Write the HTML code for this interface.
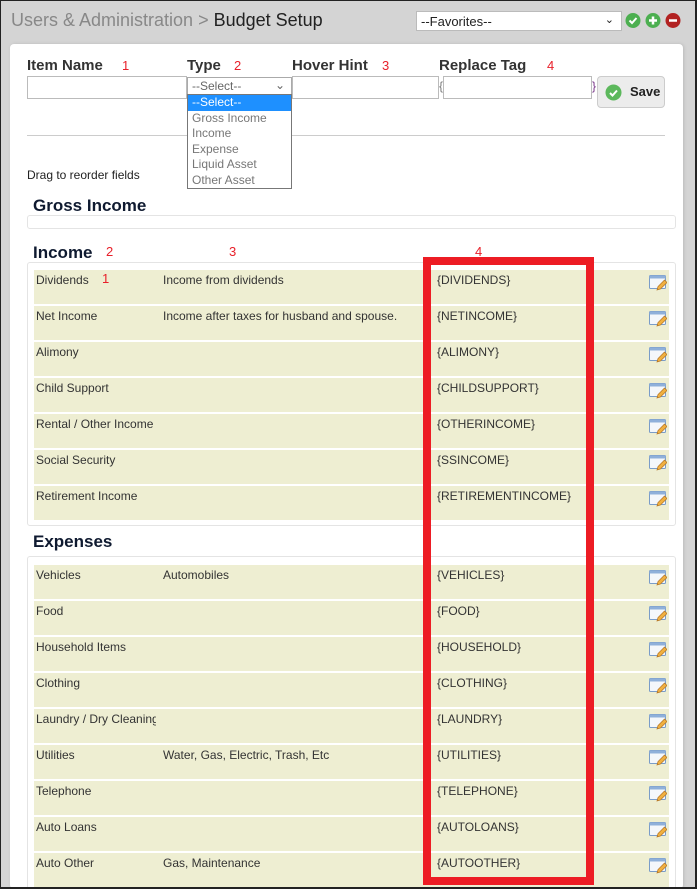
<!DOCTYPE html>
<html><head><style>
*{box-sizing:border-box;margin:0;padding:0}
html,body{width:697px;height:889px;overflow:hidden}
body{background:#d4d4d4;font-family:"Liberation Sans",Arial,sans-serif;position:relative}
.a{position:absolute}
.frame{left:0;top:0;width:697px;height:889px;border:1px solid #222;border-right:2px solid #222;border-bottom:2px solid #222;z-index:50;pointer-events:none}
.panel{left:10px;top:44px;width:673px;height:845px;background:#fff;border-radius:4px;box-shadow:1px 0 3px #bbb}
.lbl{font-weight:bold;font-size:15px;color:#333;top:57px}
.rn{color:#e8202a;font-size:13px}
.inp{border:1px solid #bbb;background:#fff;height:23px;top:76px}
.row{left:34px;width:635px;height:34px;background:#eeeed2;font-size:12px;color:#333}
.row span{position:absolute;top:3px}
.h{font-weight:bold;font-size:17px;color:#0f1a30}
.ic{position:absolute;left:615px;top:5px;width:18px;height:16px}
.box{border:1px solid #e4e4e4;border-radius:3px}
</style></head><body>
<div class="a panel"></div>
<div class="a" style="left:11px;top:10px;font-size:18px;color:#888">Users &amp; Administration &gt; <span style="color:#222">Budget Setup</span></div>
<div class="a" style="left:416px;top:11px;width:206px;height:20px;border:1px solid #bbb;background:#fff;font-size:13px;color:#222;padding:2px 4px">--Favorites--<span style="position:absolute;right:7px;top:1px;font-size:11px">&#8964;</span></div>
<svg class="a" style="left:625px;top:12px" width="60" height="17">
<circle cx="8" cy="8.5" r="7.5" fill="#4caf50"/><path d="M4.5 8.5l2.5 2.5 4.5-5" stroke="#fff" stroke-width="2" fill="none"/>
<circle cx="28" cy="8.5" r="7.5" fill="#4caf50"/><path d="M28 4.5v8M24 8.5h8" stroke="#fff" stroke-width="2.5"/>
<circle cx="48" cy="8.5" r="7.5" fill="#b22222"/><path d="M44 8.5h8" stroke="#fff" stroke-width="2.5"/></svg>

<div class="a lbl" style="left:27px">Item Name</div><div class="a rn" style="left:122px;top:58px">1</div>
<div class="a lbl" style="left:187px">Type</div><div class="a rn" style="left:234px;top:58px">2</div>
<div class="a lbl" style="left:292px">Hover Hint</div><div class="a rn" style="left:382px;top:58px">3</div>
<div class="a lbl" style="left:439px">Replace Tag</div><div class="a rn" style="left:547px;top:58px">4</div>
<div class="a inp" style="left:27px;width:160px"></div>
<div class="a inp" style="left:292px;width:147px"></div>
<div class="a" style="left:439px;top:79px;font-size:12px;color:#777">{</div>
<div class="a inp" style="left:443px;width:149px"></div>
<div class="a" style="left:592px;top:79px;font-size:12px;color:#738">}</div>
<div class="a" style="left:597px;top:76px;width:68px;height:32px;border:1px solid #ccc;border-radius:4px;background:#ececec;font-weight:bold;font-size:13px;color:#222;padding:7px 0 0 32px">Save
<svg style="position:absolute;left:7px;top:7px" width="17" height="17"><circle cx="8.5" cy="8.5" r="8" fill="#5cb85c"/><path d="M5 9l2.5 2.5 4.5-5" stroke="#fff" stroke-width="2" fill="none"/></svg></div>
<div class="a" style="left:187px;top:77px;width:105px;height:17px;border:1px solid #aaa;border-bottom:none;background:#fff;font-size:12px;color:#666;padding:1px 4px">--Select--<span style="position:absolute;right:6px;top:0">&#8964;</span></div>
<div class="a" style="left:187px;top:94px;width:105px;height:95px;border:1px solid #777;background:#fff;font-size:12px;color:#777;line-height:15.5px;z-index:5">
<div style="background:#1e90ff;color:#fff;padding-left:4px">--Select--</div>
<div style="padding-left:4px">Gross Income</div><div style="padding-left:4px">Income</div><div style="padding-left:4px">Expense</div><div style="padding-left:4px">Liquid Asset</div><div style="padding-left:4px">Other Asset</div></div>
<div class="a" style="left:27px;top:135px;width:638px;height:1px;background:#ccc"></div>
<div class="a" style="left:27px;top:168px;font-size:12px;color:#222">Drag to reorder fields</div>
<div class="a h" style="left:33px;top:196px">Gross Income</div>
<div class="a box" style="left:27px;top:215px;width:649px;height:14px"></div>
<div class="a h" style="left:33px;top:243px">Income</div>
<div class="a rn" style="left:106px;top:244px">2</div><div class="a rn" style="left:229px;top:244px">3</div><div class="a rn" style="left:475px;top:244px">4</div>
<div class="a box" style="left:27px;top:262px;width:649px;height:264px"></div>
<div class="a h" style="left:33px;top:532px">Expenses</div>
<div class="a box" style="left:27px;top:556px;width:649px;height:340px"></div>
<div id="rows"></div>
<div class="a" style="left:423px;top:257px;width:171px;height:628px;border:8px solid #ed1c24;z-index:10"></div>
<div class="a frame"></div>
<script>
var ic='<svg class="ic" viewBox="0 0 18 16"><rect x="0.5" y="0.5" width="16" height="13" rx="1" fill="#f4f7fb" stroke="#7a9cc8"/><rect x="0.5" y="0.5" width="16" height="3" fill="#8fb0da"/><path d="M8 15l1-3.5 6.5-6.5 2.5 2.5-6.5 6.5z" fill="#f0b040" stroke="#b07020" stroke-width=".7"/></svg>';
var inc=[["Dividends","Income from dividends","DIVIDENDS"],["Net Income","Income after taxes for husband and spouse.","NETINCOME"],["Alimony","","ALIMONY"],["Child Support","","CHILDSUPPORT"],["Rental / Other Income","","OTHERINCOME"],["Social Security","","SSINCOME"],["Retirement Income","","RETIREMENTINCOME"]];
var exp=[["Vehicles","Automobiles","VEHICLES"],["Food","","FOOD"],["Household Items","","HOUSEHOLD"],["Clothing","","CLOTHING"],["Laundry / Dry Cleaning","","LAUNDRY"],["Utilities","Water, Gas, Electric, Trash, Etc","UTILITIES"],["Telephone","","TELEPHONE"],["Auto Loans","","AUTOLOANS"],["Auto Other","Gas, Maintenance","AUTOOTHER"]];
var h='';
function mk(a,y0){a.forEach(function(r,i){h+='<div class="a row" style="top:'+(y0+36*i)+'px"><span style="left:2px;width:120px;overflow:hidden;white-space:nowrap">'+r[0]+'</span><span style="left:129px">'+r[1]+'</span><span style="left:403px">{'+r[2]+'}</span>'+ic+'</div>';});}
mk(inc,270);mk(exp,565);
h+='<div class="a rn" style="left:102px;top:271px;z-index:3">1</div>';
document.getElementById('rows').innerHTML=h;
</script>
</body></html>
